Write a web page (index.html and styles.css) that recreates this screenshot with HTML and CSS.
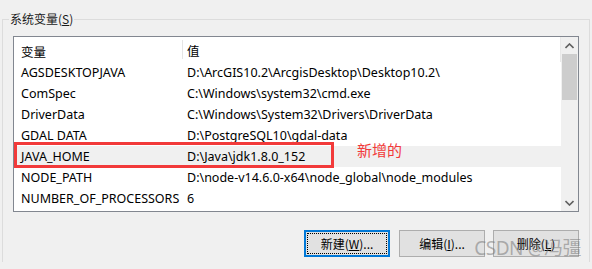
FILE: index.html
```html
<!DOCTYPE html>
<html lang="zh-CN">
<head>
<meta charset="utf-8">
<link rel="stylesheet" href="styles.css">
</head>
<body>
<fieldset class="group">
  <legend class="legend">系统变量(<u>S</u>)</legend>
  <div class="listbox">
    <div class="list">
      <div class="head">
        <div class="c1 hcell">变量</div>
        <div class="c2 hcell">值</div>
      </div>
      <div class="row"><div class="c1">AGSDESKTOPJAVA</div><div class="c2">D:\ArcGIS10.2\ArcgisDesktop\Desktop10.2\</div></div>
      <div class="row"><div class="c1">ComSpec</div><div class="c2">C:\Windows\system32\cmd.exe</div></div>
      <div class="row"><div class="c1">DriverData</div><div class="c2">C:\Windows\System32\Drivers\DriverData</div></div>
      <div class="row"><div class="c1">GDAL DATA</div><div class="c2">D:\PostgreSQL10\gdal-data</div></div>
      <div class="row hot"><div class="c1">JAVA_HOME</div><div class="c2">D:\Java\jdk1.8.0_152</div>
        <div class="mark"></div><div class="note">新增的</div></div>
      <div class="row"><div class="c1">NODE_PATH</div><div class="c2">D:\node-v14.6.0-x64\node_global\node_modules</div></div>
      <div class="row"><div class="c1">NUMBER_OF_PROCESSORS</div><div class="c2">6</div></div>
    </div>
    <div class="vscroll">
      <div class="arrow">
        <svg width="9" height="6" viewBox="0 0 9 6"><path d="M0.5 5 L4.5 1 L8.5 5" fill="none" stroke="#606060" stroke-width="1.6"/></svg>
      </div>
      <div class="track"><div class="thumb"></div></div>
      <div class="arrow">
        <svg width="9" height="6" viewBox="0 0 9 6"><path d="M0.5 1 L4.5 5 L8.5 1" fill="none" stroke="#606060" stroke-width="1.6"/></svg>
      </div>
    </div>
  </div>
  <div class="buttons">
    <button class="btn focus"><span class="focusring">新建(<u>W</u>)...</span></button>
    <button class="btn">编辑(<u>I</u>)...</button>
    <button class="btn">删除(<u>L</u>)</button>
    <div class="watermark">CSDN @冯彊</div>
  </div>
</fieldset>
</body>
</html>
```

FILE: styles.css
```css
html, body {
  margin: 0;
  padding: 0;
  background: #f0f0f0;
  width: 592px;
  height: 269px;
  overflow: hidden;
}
body {
  font-family: "Noto Sans", "Noto Sans CJK SC", sans-serif;
  font-size: 12px;
  color: #000;
}
.group {
  margin: 12px 2px 0 2px;
  padding: 0 0 0 10px;
  border: 1px solid #dcdcdc;
  border-bottom: none;
  min-width: 0;
  height: 250px;
  box-sizing: border-box;
}
.legend {
  padding: 0 1px;
  margin-left: -4px;
  line-height: 14px;
  font-family: "Noto Sans CJK SC", sans-serif;
  font-size: 12px;
  color: #1a1a1a;
}
.legend u { text-decoration: underline; text-underline-offset: 1px; }
.listbox {
  margin-top: 10px;
  width: 564px;
  height: 174px;
  border: 1px solid #828790;
  background: #fff;
  display: flex;
}
.list {
  flex: 1;
  display: flex;
  flex-direction: column;
  position: relative;
}
.head {
  height: 25px;
  display: flex;
  align-items: center;
  border-right: 1px solid #e8e8e8;
}
.hcell {
  font-family: "Noto Sans CJK SC", sans-serif;
  font-size: 12.5px;
  padding-top: 2px;
}
.head .c1 {
  border-right: 1px solid #e5e5e5;
  height: 17px;
  line-height: 19px;
}
.row {
  height: 21px;
  display: flex;
  align-items: center;
  position: relative;
  font-size: 12.5px;
}
.c1 {
  width: 161px;
  padding-left: 7px;
  flex: none;
  white-space: nowrap;
}
.c2 {
  padding-left: 5px;
  white-space: nowrap;
}
.head .c2 { padding-left: 4px; }
.hot {
  background: #f0f0f0;
}
.mark {
  position: absolute;
  left: 0;
  top: -4px;
  width: 320px;
  height: 26px;
  box-sizing: border-box;
  border: 3px solid #f23a3a;
}
.note {
  position: absolute;
  left: 343px;
  top: -7px;
  font-family: "Noto Sans CJK SC", sans-serif;
  font-size: 15px;
  color: #f23a3a;
}
.vscroll {
  width: 17px;
  background: #f0f0f0;
  display: flex;
  flex-direction: column;
}
.arrow {
  height: 17px;
  display: flex;
  align-items: center;
  justify-content: center;
}
.track {
  flex: 1;
  padding: 0 1px;
}
.thumb {
  height: 46px;
  background: #cdcdcd;
}
.buttons {
  display: flex;
  justify-content: flex-end;
  gap: 9px;
  margin-top: 18px;
  width: 566px;
  position: relative;
}
.btn {
  width: 86px;
  height: 27px;
  margin: 0;
  padding: 0;
  border: 1px solid #adadad;
  background: #e1e1e1;
  font-family: "Noto Sans CJK SC", sans-serif;
  font-size: 12px;
  color: #000;
  display: flex;
  align-items: center;
  justify-content: center;
}
.btn:last-of-type { margin-left: -1px; }
.focus {
  border: 1px solid #0078d7;
  box-shadow: inset 0 0 0 1px #0078d7;
  padding: 2px;
}
.focusring {
  flex: 1;
  align-self: stretch;
  display: flex;
  align-items: center;
  justify-content: center;
  border: 1px dotted #000;
}
.watermark {
  position: absolute;
  right: -2px;
  top: 3px;
  font-family: "Noto Sans", "Noto Sans CJK SC", sans-serif;
  font-size: 19px;
  color: rgba(120, 120, 120, 0.55);
  pointer-events: none;
  letter-spacing: -0.5px;
}
```
